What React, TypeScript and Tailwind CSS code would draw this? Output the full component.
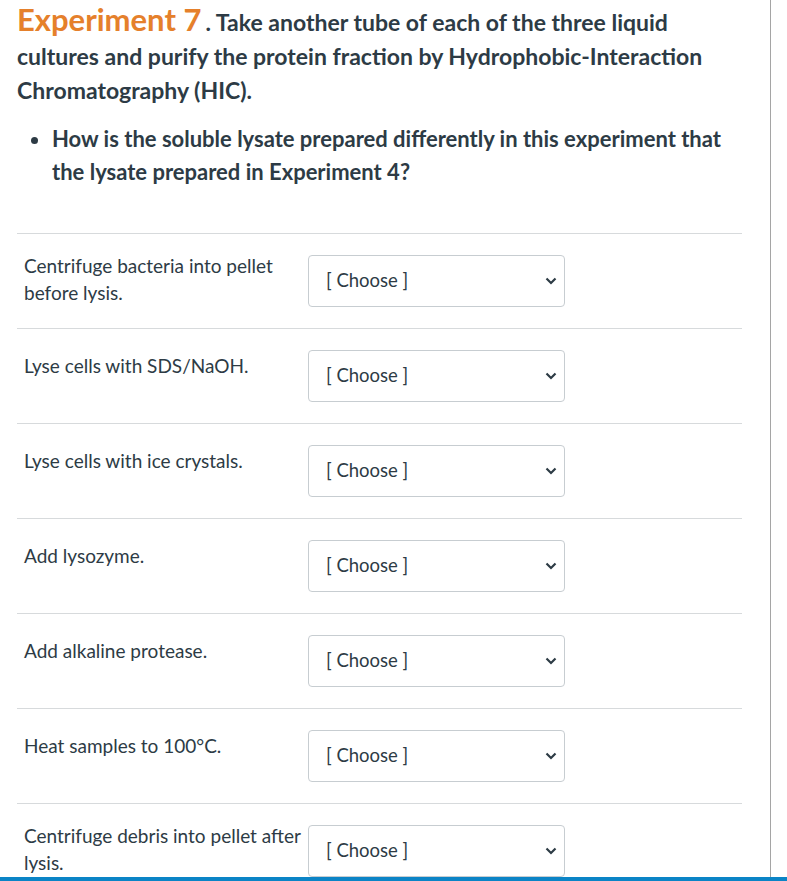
import React from 'react';

const rows: { label: string; twoLine?: boolean }[] = [
  { label: 'Centrifuge bacteria into pellet before lysis.', twoLine: true },
  { label: 'Lyse cells with SDS/NaOH.' },
  { label: 'Lyse cells with ice crystals.' },
  { label: 'Add lysozyme.' },
  { label: 'Add alkaline protease.' },
  { label: 'Heat samples to 100°C.' },
  { label: 'Centrifuge debris into pellet after lysis.', twoLine: true },
];

const Chevron = () => (
  <svg width="12" height="8" viewBox="0 0 12 8" className="text-[#2d3b45]">
    <polyline points="1.5,1.5 6,6 10.5,1.5" fill="none" stroke="currentColor" strokeWidth="2.2" />
  </svg>
);

const ChooseSelect = () => (
  <div className="w-[257px] h-[52px] shrink-0 border border-[#c7cdd1] rounded-[4px] bg-white flex items-center justify-between pl-[17px] pr-[7px]">
    <span className="text-[18.5px] text-[#2d3b45]">[ Choose ]</span>
    <Chevron />
  </div>
);

export default function App() {
  return (
    <div className="h-[881px] overflow-hidden bg-white" style={{ fontFamily: 'Lato, "Noto Sans", sans-serif' }}>
      <div className="w-[771px] min-h-[881px] border-r-[1.5px] border-[#a5a5a5] pl-[17px] pr-[28px] pt-[2px] text-[#2d3b45]">
        {/* heading paragraph */}
        <p className="text-[23px] leading-[34px] font-bold">
          <span className="text-[31px] font-bold text-[#e5802b] mr-[4px]">Experiment 7</span>. Take another tube of each of the three liquid cultures and purify the protein fraction by Hydrophobic-Interaction Chromatography (HIC).
        </p>

        <ul className="list-disc pl-[35px] mt-[15px] text-[22px] leading-[33px] font-bold">
          <li>How is the soluble lysate prepared differently in this experiment that the lysate prepared in Experiment 4?</li>
        </ul>

        {/* matching table */}
        <div className="mt-[45px]">
          {rows.map((r, i) => (
            <div key={i} className="border-t border-[#d7dadc] flex items-start pt-[21px] pb-[21px]">
              <div className={`w-[291px] shrink-0 pl-[7px] text-[19px] leading-[27px] ${r.twoLine ? '-mt-[3px]' : 'mt-[2px]'}`}>
                {r.label}
              </div>
              <ChooseSelect />
            </div>
          ))}
        </div>
      </div>
      <div className="fixed bottom-0 left-0 right-0 h-[4px] bg-[#0b84c6]" />
    </div>
  );
}
